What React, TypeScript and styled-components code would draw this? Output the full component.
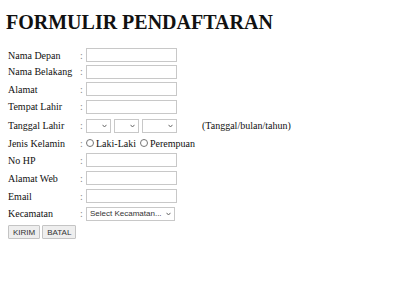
import React from 'react';
import styled, { createGlobalStyle } from 'styled-components';

const GlobalStyle = createGlobalStyle`
  html, body {
    margin: 0;
    background: #ffffff;
  }
  body {
    font-family: 'Liberation Serif', 'Times New Roman', serif;
    color: #111;
  }
`;

const Page = styled.div`
  padding: 11px 0 0 6px;
`;

const Title = styled.h1`
  margin: 0 0 13px 0;
  font-size: 20px;
  font-weight: bold;
  color: #111;
`;

const FormTable = styled.table`
  border-collapse: collapse;
  font-size: 10px;
  margin-left: 2px;
`;

const Row = styled.tr<{ $h?: number }>`
  height: ${(p) => p.$h ?? 17}px;
`;

const Label = styled.td`
  width: 72px;
  padding: 0;
  vertical-align: middle;
  white-space: nowrap;
`;

const Colon = styled.td`
  width: 6px;
  padding: 0;
  color: #888;
  vertical-align: middle;
`;

const Field = styled.td`
  padding: 0;
  vertical-align: middle;
  white-space: nowrap;
`;

const TextInput = styled.input`
  box-sizing: border-box;
  width: 91px;
  height: 14px;
  border: 1px solid #c8c8c8;
  padding: 0;
  margin: 0;
  vertical-align: middle;
`;

const SelectWrap = styled.span<{ $w: number }>`
  position: relative;
  display: inline-block;
  width: ${(p) => p.$w}px;
  height: 14px;
  margin-right: 3px;
  vertical-align: middle;
`;

const BareSelect = styled.select`
  appearance: none;
  box-sizing: border-box;
  width: 100%;
  height: 100%;
  border: 1px solid #c8c8c8;
  background: #fff;
  margin: 0;
  padding: 0 10px 0 3px;
  font-family: 'Liberation Sans', Tahoma, sans-serif;
  font-size: 8px;
  color: #333;
  display: block;
`;

const Chevron = styled.svg`
  position: absolute;
  right: 4px;
  top: 5px;
  width: 5px;
  height: 4px;
  pointer-events: none;
`;

const Hint = styled.span`
  margin-left: 22px;
  vertical-align: middle;
`;

const Radio = styled.label`
  display: inline-flex;
  align-items: center;
  margin-right: 4px;
`;

const RadioInput = styled.input`
  width: 8px;
  height: 8px;
  margin: 0 2px 0 0;
`;

const Buttons = styled.div`
  display: flex;
  gap: 2px;
  margin-top: 3px;
  margin-left: 2px;
`;

const Button = styled.button`
  height: 14px;
  padding: 0 4px;
  font-family: 'Liberation Sans', Tahoma, sans-serif;
  font-size: 8px;
  color: #333;
  background: #eeeeee;
  border: 1px solid #c4c4c4;
  border-radius: 1px;
`;

const Select = ({ w, text }: { w: number; text?: string }) => (
  <SelectWrap $w={w}>
    <BareSelect>
      <option>{text ?? ''}</option>
    </BareSelect>
    <Chevron viewBox="0 0 5 4">
      <path d="M0.5 0.8 L2.5 3 L4.5 0.8" fill="none" stroke="#666" strokeWidth="1" />
    </Chevron>
  </SelectWrap>
);

const textRows = [
  { label: 'Nama Depan', h: 16 },
  { label: 'Nama Belakang', h: 17 },
  { label: 'Alamat', h: 18 },
  { label: 'Tempat Lahir', h: 17 },
];

export default function App() {
  return (
    <Page>
      <GlobalStyle />
      <Title>FORMULIR PENDAFTARAN</Title>
      <FormTable>
        <tbody>
          {textRows.map((r) => (
            <Row key={r.label} $h={r.h}>
              <Label>{r.label}</Label>
              <Colon>:</Colon>
              <Field>
                <TextInput type="text" />
              </Field>
            </Row>
          ))}
          <Row $h={21}>
            <Label>Tanggal Lahir</Label>
            <Colon>:</Colon>
            <Field>
              <Select w={25} />
              <Select w={25} />
              <Select w={35} />
              <Hint>(Tanggal/bulan/tahun)</Hint>
            </Field>
          </Row>
          <Row $h={15}>
            <Label>Jenis Kelamin</Label>
            <Colon>:</Colon>
            <Field>
              <Radio><RadioInput type="radio" name="jk" />Laki-Laki</Radio>
              <Radio><RadioInput type="radio" name="jk" />Perempuan</Radio>
            </Field>
          </Row>
          <Row $h={18}>
            <Label>No HP</Label>
            <Colon>:</Colon>
            <Field><TextInput type="text" /></Field>
          </Row>
          <Row $h={18}>
            <Label>Alamat Web</Label>
            <Colon>:</Colon>
            <Field><TextInput type="text" /></Field>
          </Row>
          <Row $h={18}>
            <Label>Email</Label>
            <Colon>:</Colon>
            <Field><TextInput type="text" /></Field>
          </Row>
          <Row $h={17}>
            <Label>Kecamatan</Label>
            <Colon>:</Colon>
            <Field>
              <Select w={89} text="Select Kecamatan..." />
            </Field>
          </Row>
        </tbody>
      </FormTable>
      <Buttons>
        <Button>KIRIM</Button>
        <Button>BATAL</Button>
      </Buttons>
    </Page>
  );
}
